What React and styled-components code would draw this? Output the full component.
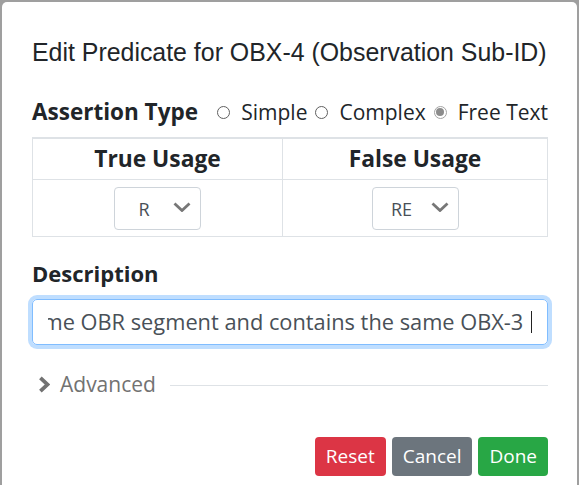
import styled, { createGlobalStyle } from "styled-components";

const GlobalStyle = createGlobalStyle`
    html, body {
        margin: 0;
        padding: 0;
    }
    body {
        background: #9f9f9f;
        font-family: "Open Sans", "Noto Sans", sans-serif;
        color: #212529;
    }
`;

const Page = styled.div`
    width: 579px;
    height: 485px;
    box-sizing: border-box;
    padding: 2px 2px 0 2px;
    overflow: hidden;
    background: #9f9f9f;
`;

const Modal = styled.div`
    display: flex;
    flex-direction: column;
    height: 520px;
    box-sizing: border-box;
    padding: 35px 29px 0 30px;
    background: #fff;
    border-radius: 5px;
`;

const Title = styled.h5`
    margin: 0;
    font-family: "Liberation Sans", Arial, sans-serif;
    font-weight: 400;
    font-size: 24.9px;
    line-height: 30px;
    color: #212529;
    white-space: nowrap;
`;

const AssertionRow = styled.div`
    display: flex;
    align-items: center;
    margin-top: 30px;
`;

const BoldLabel = styled.span`
    font-weight: 700;
    font-size: 22.5px;
    line-height: 30px;
    color: #212529;
`;

const RadioGroup = styled.div`
    display: flex;
    align-items: center;
    gap: 8px;
    margin-left: auto;
`;

const RadioOption = styled.label`
    display: flex;
    align-items: center;
    gap: 11px;
    font-size: 21px;
    line-height: 30px;
    color: #212529;
`;

const RadioDot = styled.span`
    position: relative;
    flex-shrink: 0;
    width: 13px;
    height: 13px;
    box-sizing: border-box;
    border-radius: 50%;
    background: #fff;
    border: ${(p) => (p.$checked ? "1.5px solid #a3a3a3" : "1px solid #606060")};

    &::after {
        content: "";
        display: ${(p) => (p.$checked ? "block" : "none")};
        position: absolute;
        inset: 1.5px;
        border-radius: 50%;
        background: #8c8c8c;
    }
`;

const UsageTable = styled.div`
    display: grid;
    grid-template-columns: 250px 1fr;
    margin-top: 10px;
    border: 1px solid #dee2e6;
    border-top-width: 2px;
`;

const HeadCell = styled.div`
    padding: 5px 0;
    height: 30px;
    text-align: center;
    font-weight: 700;
    font-size: 22.8px;
    line-height: 30px;
    color: #212529;
    border-bottom: 1px solid #dee2e6;
    border-right: ${(p) => (p.$first ? "1px solid #dee2e6" : "none")};
`;

const BodyCell = styled.div`
    display: flex;
    justify-content: center;
    padding: 7px 0 6px;
    border-right: ${(p) => (p.$first ? "1px solid #dee2e6" : "none")};
`;

const SelectBox = styled.div`
    display: flex;
    align-items: center;
    width: 87px;
    height: 43px;
    box-sizing: border-box;
    padding-right: 9px;
    border: 1px solid #ced4da;
    border-radius: 4px;
    background: #fff;
`;

const SelectValue = styled.span`
    flex: 1;
    text-align: center;
    font-size: 18px;
    color: #495057;
`;

const Chevron = styled.svg`
    width: 18px;
    height: 10px;
    margin-top: -4px;
`;

const FieldLabel = styled(BoldLabel)`
    display: block;
    margin-top: 21px;
    font-size: 22px;
`;

const InputBox = styled.div`
    display: flex;
    align-items: center;
    height: 46px;
    box-sizing: border-box;
    margin-top: 11px;
    padding: 0 15px;
    border: 1px solid #80bdff;
    border-radius: 5px;
    box-shadow: 0 0 0 4px rgba(0, 123, 255, 0.25);
    font-size: 21.8px;
    line-height: 30px;
    color: #495057;
`;

const InputClip = styled.div`
    flex: 1;
    display: flex;
    justify-content: flex-end;
    align-items: center;
    overflow: hidden;
`;

const InputText = styled.span`
    flex-shrink: 0;
    white-space: pre;
`;

const Caret = styled.span`
    flex-shrink: 0;
    width: 1px;
    height: 22px;
    margin-left: 2px;
    background: #222;
`;

const AdvancedRow = styled.div`
    display: flex;
    align-items: center;
    margin-top: 24px;
    padding-left: 6px;
    font-size: 21px;
    line-height: 30px;
    color: #727272;
`;

const AdvancedIcon = styled.svg`
    width: 12px;
    height: 17px;
    margin-right: 10px;
`;

const Divider = styled.div`
    flex: 1;
    height: 1px;
    margin: 3px 0 0 14px;
    background: #dee2e6;
`;

const Footer = styled.div`
    display: flex;
    justify-content: flex-end;
    gap: 6px;
    margin-top: 38px;
`;

const Button = styled.button`
    height: 39px;
    padding: 0 11px;
    border: none;
    border-radius: 4px;
    background: ${(p) => p.$bg};
    color: #fff;
    font-family: "Open Sans", "Noto Sans", sans-serif;
    font-size: 19px;
    line-height: 39px;
`;

const radios = [
    { label: "Simple", checked: false },
    { label: "Complex", checked: false },
    { label: "Free Text", checked: true },
];

const usages = [
    { head: "True Usage", value: "R" },
    { head: "False Usage", value: "RE" },
];

function DownChevron() {
    return (
        <Chevron viewBox="0 0 18 10">
            <polyline points="1.5,1.5 9,8.5 16.5,1.5" fill="none" stroke="#777" strokeWidth="2.8" />
        </Chevron>
    );
}

export default function App() {
    return (
        <Page>
            <GlobalStyle />
            <Modal>
                <Title>Edit Predicate for OBX-4 (Observation Sub-ID)</Title>

                <AssertionRow>
                    <BoldLabel>Assertion Type</BoldLabel>
                    <RadioGroup>
                        {radios.map((r) => (
                            <RadioOption key={r.label}>
                                <RadioDot $checked={r.checked} />
                                {r.label}
                            </RadioOption>
                        ))}
                    </RadioGroup>
                </AssertionRow>

                <UsageTable>
                    {usages.map((u, idx) => (
                        <HeadCell key={u.head} $first={idx === 0}>{u.head}</HeadCell>
                    ))}
                    {usages.map((u, idx) => (
                        <BodyCell key={u.value} $first={idx === 0}>
                            <SelectBox>
                                <SelectValue>{u.value}</SelectValue>
                                <DownChevron />
                            </SelectBox>
                        </BodyCell>
                    ))}
                </UsageTable>

                <FieldLabel>Description</FieldLabel>
                <InputBox>
                    <InputClip>
                        <InputText>the same OBR segment and contains the same OBX-3 </InputText>
                        <Caret />
                    </InputClip>
                </InputBox>

                <AdvancedRow>
                    <AdvancedIcon viewBox="0 0 12 17">
                        <polyline points="2.4,1.8 9.6,8.5 2.4,15.2" fill="none" stroke="#727272" strokeWidth="3.8" />
                    </AdvancedIcon>
                    Advanced
                    <Divider />
                </AdvancedRow>

                <Footer>
                    <Button $bg="#dc3545">Reset</Button>
                    <Button $bg="#6c757d">Cancel</Button>
                    <Button $bg="#28a745">Done</Button>
                </Footer>
            </Modal>
        </Page>
    );
}
